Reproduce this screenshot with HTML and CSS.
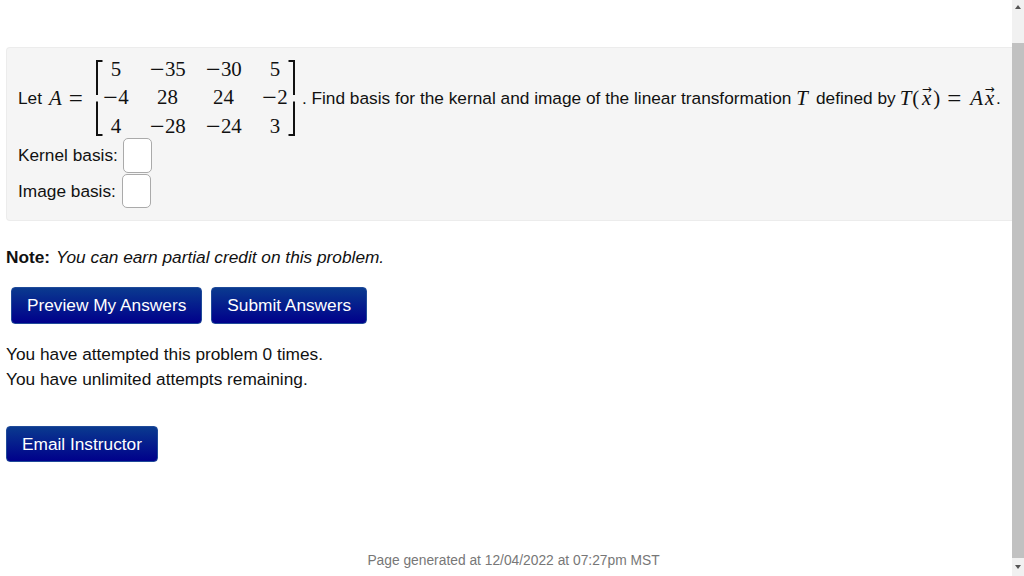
FILE: index.html
```html
<!DOCTYPE html>
<html lang="en">
<head>
<meta charset="utf-8">
<title>Problem</title>
<link rel="stylesheet" href="styles.css">
</head>
<body>
<main class="page">
  <section class="problem">
    <div class="statement">
      <span>Let</span>
      <span class="math let-a"><i>A</i><span class="eq">=</span></span>
      <div class="matrix">
        <svg class="bracket left" viewBox="0 0 7 76" aria-hidden="true"><path d="M6.5 1H1V35M1 41.5V75H6.5"/></svg>
        <span>5</span><span><span class="neg">−</span>35</span><span><span class="neg">−</span>30</span><span>5</span>
        <span><span class="neg">−</span>4</span><span>28</span><span>24</span><span><span class="neg">−</span>2</span>
        <span>4</span><span><span class="neg">−</span>28</span><span><span class="neg">−</span>24</span><span>3</span>
        <svg class="bracket right" viewBox="0 0 7 76" aria-hidden="true"><path d="M.5 1H6V35M6 41.5V75H.5"/></svg>
      </div>
      <span class="after-matrix">. Find basis for the kernal and image of the linear transformation</span>
      <span class="math t-var"><i>T</i></span>
      <span class="gap-text">defined by</span>
      <span class="math formula"><i class="fn">T</i><span class="paren">(</span><i class="vec">x</i>)<span class="eq">=</span><i>A</i><i class="vec">x</i></span><span>.</span>
    </div>
    <div class="answer kernel"><label>Kernel basis:</label><input class="box" type="text"></div>
    <div class="answer image"><label>Image basis:</label><input class="box" type="text"></div>
  </section>
  <p class="note"><b>Note:</b> <i>You can earn partial credit on this problem.</i></p>
  <div class="actions">
    <button class="btn">Preview My Answers</button>
    <button class="btn">Submit Answers</button>
  </div>
  <p class="attempts">You have attempted this problem 0 times.<br>You have unlimited attempts remaining.</p>
  <button class="btn email">Email Instructor</button>
  <footer class="generated">Page generated at 12/04/2022 at 07:27pm MST</footer>
</main>
<aside class="scrollbar">
  <span class="arrow up"></span>
  <span class="thumb"></span>
  <span class="arrow down"></span>
</aside>
</body>
</html>
```
FILE: styles.css
```css
* { box-sizing: border-box; }
html, body { height: 100%; }
body {
  margin: 0;
  display: flex;
  overflow: hidden;
  background: #fff;
  color: #111;
  font: 17.28px/25px "Liberation Sans", Arial, sans-serif;
}
.page {
  flex: 1;
  min-width: 0;
  height: 576px;
  display: flex;
  flex-direction: column;
  align-items: flex-start;
  padding: 47px 0 0 6px;
}
.problem {
  width: 100%;
  height: 174px;
  padding: 9px 0 0 11px;
  background: #f5f5f5;
  border: 1px solid #ececec;
  border-right: 0;
  border-radius: 4px 0 0 4px;
}
.statement {
  display: flex;
  align-items: center;
  height: 81px;
  white-space: nowrap;
}
.statement > span { margin-top: 2px; }
.math { font-family: "Liberation Serif", serif; font-size: 20.9px; }
.eq { margin: 0 13px 0 7px; font-size: 25px; line-height: 0; vertical-align: -2px; }
.statement > .let-a { margin-left: 7px; }
.matrix {
  position: relative;
  flex: none;
  display: grid;
  grid-template-columns: 26px 35px 35px 26px;
  column-gap: 21px;
  grid-auto-rows: 28.5px;
  width: 199px;
  height: 85.5px;
  padding-left: 7px;
  font-family: "Liberation Serif", serif;
  font-size: 20.9px;
  line-height: 28.5px;
  text-align: center;
}
.neg { display: inline-block; width: 15px; font-size: 26px; line-height: 0; vertical-align: -2px; }
.bracket {
  position: absolute;
  top: 5px;
  width: 7px;
  height: 76px;
  fill: none;
  stroke: #111;
  stroke-width: 2;
}
.bracket.left { left: 0; }
.bracket.right { right: 0; }
.statement > .after-matrix { margin-left: 7px; }
.statement > .t-var { margin-left: 5px; }
.statement > .gap-text { margin-left: 8px; }
.statement > .formula { margin-left: 4px; }
.fn { margin-right: 1px; }
.paren { margin-right: 1px; }
.formula .eq { margin: 0 9px 0 7px; }
.vec { position: relative; display: inline-block; width: 13px; text-align: center; }
.vec::before {
  content: "→";
  position: absolute;
  left: 0;
  right: 0;
  top: -5px;
  font: 12px/16px "DejaVu Sans", sans-serif;
}
.answer { display: flex; align-items: center; }
.kernel { height: 35px; gap: 5px; }
.image { height: 34px; margin-top: 1px; gap: 6px; }
.box {
  width: 29px;
  height: 100%;
  padding: 0;
  background: #fff;
  border: 1px solid #aaa;
  border-radius: 5px;
}
.note { margin: 24px 0 0; }
.note i { margin-left: 1px; }
.actions { display: flex; gap: 9px; margin: 17px 0 0 5px; }
.btn {
  height: 37px;
  padding: 0 15px;
  color: #fff;
  font: 17.28px/25px "Liberation Sans", Arial, sans-serif;
  background: linear-gradient(#0a3a8f, #00008b);
  border: 1px solid #1f4a99;
  border-radius: 4px;
}
.attempts { margin: 18px 0 0; }
.email { height: 36px; margin-top: 34px; }
.generated {
  align-self: stretch;
  margin-top: 86px;
  padding-left: 9px;
  color: #777;
  font-size: 13.8px;
  line-height: 25px;
  text-align: center;
}
.scrollbar {
  flex: none;
  width: 12px;
  height: 576px;
  display: flex;
  flex-direction: column;
  background: #f1f1f1;
}
.thumb { flex: 1; background: #c1c1c1; }
.arrow { flex: none; height: 43px; display: flex; justify-content: center; }
.arrow.down { height: 18px; }
.arrow::before {
  content: "";
  width: 0;
  height: 0;
  border-left: 3.5px solid transparent;
  border-right: 3.5px solid transparent;
}
.arrow.up::before { margin-top: 5px; border-bottom: 4px solid #555; }
.arrow.down::before { margin-top: 7px; border-top: 4px solid #555; }
```
